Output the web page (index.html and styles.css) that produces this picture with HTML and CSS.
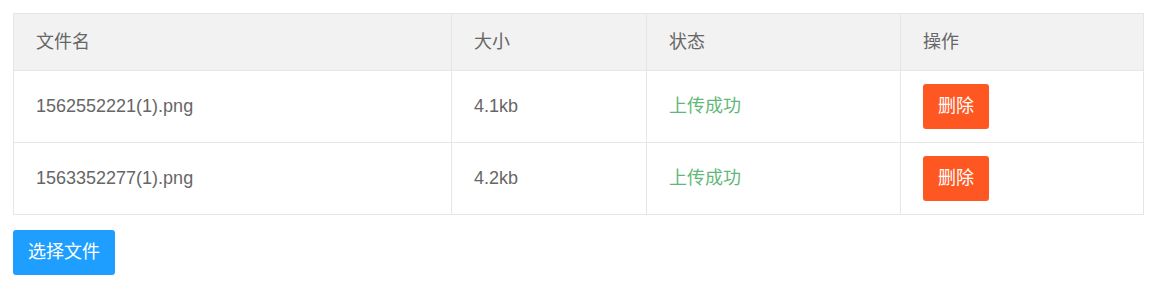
FILE: index.html
```html
<!DOCTYPE html>
<html lang="zh-CN">
<head>
<meta charset="utf-8">
<title>上传列表</title>
<link rel="stylesheet" href="styles.css">
</head>
<body>
<div class="wrap">
  <table class="file-table">
    <colgroup>
      <col class="c-name">
      <col class="c-size">
      <col class="c-status">
      <col class="c-op">
    </colgroup>
    <thead>
      <tr><th>文件名</th><th>大小</th><th>状态</th><th>操作</th></tr>
    </thead>
    <tbody>
      <tr>
        <td>1562552221(1).png</td>
        <td>4.1kb</td>
        <td><span class="ok">上传成功</span></td>
        <td><button class="btn btn-danger">删除</button></td>
      </tr>
      <tr>
        <td>1563352277(1).png</td>
        <td>4.2kb</td>
        <td><span class="ok">上传成功</span></td>
        <td><button class="btn btn-danger">删除</button></td>
      </tr>
    </tbody>
  </table>
  <button class="btn btn-normal choose">选择文件</button>
</div>
</body>
</html>
```

FILE: styles.css
```css
html, body {
  margin: 0;
  padding: 0;
  background: #fff;
}
body {
  font-family: "Liberation Sans", "Noto Sans CJK SC", sans-serif;
  color: #666;
  font-size: 18px;
}
.wrap {
  padding: 13px;
}
.file-table {
  width: 1130px;
  border-collapse: collapse;
  table-layout: fixed;
}
.c-name { width: 438px; }
.c-size { width: 195px; }
.c-status { width: 254px; }
.c-op { width: 243px; }
.file-table th,
.file-table td {
  border: 1px solid #e6e6e6;
  padding: 0 22px;
  text-align: left;
  vertical-align: middle;
  font-weight: normal;
  line-height: 27px;
  font-size: 18px;
  color: #666;
}
.file-table th {
  background: #f2f2f2;
  height: 56px;
}
.file-table td {
  height: 71px;
}
.ok {
  color: #5FB878;
}
.btn {
  display: block;
  height: 45px;
  padding: 0 15px;
  border: none;
  border-radius: 3px;
  color: #fff;
  font-family: "Liberation Sans", "Noto Sans CJK SC", sans-serif;
  font-size: 18px;
  line-height: 45px;
  cursor: pointer;
}
.btn-danger {
  background: #FF5722;
}
.btn-normal {
  background: #1E9FFF;
}
.choose {
  margin-top: 15px;
}
```
